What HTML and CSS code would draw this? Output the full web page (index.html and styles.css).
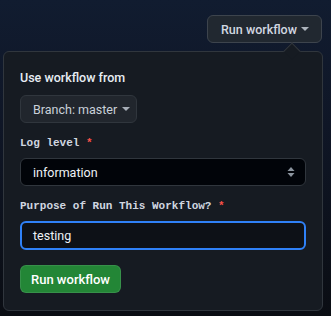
FILE: index.html
```html
<!DOCTYPE html>
<html lang="en">
  <head>
    <meta charset="UTF-8" />
    <meta name="viewport" content="width=device-width,initial-scale=1.0" />
    <title>Run workflow</title>
    <link rel="stylesheet" href="styles.css">
  </head>
  <body>
    <header class="top">
      <button class="top-btn">Run workflow <span class="caret"></span></button>
    </header>
    <div class="popover">
      <div class="label">Use workflow from</div>
      <button class="branch-btn">Branch: master <span class="caret"></span></button>

      <div class="mono-label">Log level <span class="req">*</span></div>
      <div class="select">
        <span>information</span>
        <svg class="updown" width="8" height="12" viewBox="0 0 8 12">
          <path d="M4 1 L7.5 5 H0.5 Z" fill="#8b949e" />
          <path d="M4 11 L7.5 7 H0.5 Z" fill="#8b949e" />
        </svg>
      </div>

      <div class="mono-label">Purpose of Run This Workflow? <span class="req">*</span></div>
      <div class="input">testing</div>

      <button class="run-btn">Run workflow</button>
    </div>
  </body>
</html>
```

FILE: styles.css
```css
* {
  padding: 0;
  margin: 0;
  box-sizing: border-box;
  font-family: Roboto, 'Liberation Sans', sans-serif;
  white-space: nowrap;
}
body {
  width: 331px;
  height: 316px;
  overflow: hidden;
  background: linear-gradient(180deg, #111c30 0%, #0f1626 40%, #0a0d13 100%);
}
button {
  cursor: pointer;
}
.top {
  display: flex;
  justify-content: flex-end;
  padding: 15px 9px 0 0;
}
.top-btn {
  height: 28px;
  width: 115px;
  display: flex;
  align-items: center;
  justify-content: space-between;
  padding: 0 12px 0 13px;
  background: #212830;
  border: 1px solid #3d444d;
  border-radius: 6px;
  color: #d1d7e0;
  font-size: 12.5px;
  font-weight: 500;
}
.caret {
  width: 0;
  height: 0;
  border-left: 4px solid transparent;
  border-right: 4px solid transparent;
  border-top: 4px solid currentColor;
  opacity: 0.8;
}
.popover {
  position: relative;
  margin: 8px 0 0 3px;
  width: 320px;
  background: #161b22;
  border: 1px solid #30363d;
  border-radius: 6px;
  padding: 16px 16px 17px;
  display: flex;
  flex-direction: column;
  align-items: flex-start;
}
.popover::before {
  content: '';
  position: absolute;
  top: -7px;
  right: 24px;
  width: 11px;
  height: 11px;
  background: #161b22;
  border-left: 1px solid #30363d;
  border-top: 1px solid #30363d;
  transform: rotate(45deg);
}
.label {
  font-size: 12.5px;
  font-weight: 500;
  line-height: 20px;
  color: #e6edf3;
}
.branch-btn {
  margin-top: 7px;
  height: 28px;
  width: 117px;
  display: flex;
  align-items: center;
  gap: 5px;
  padding: 0 12px;
  background: #21262d;
  border: 1px solid #30363d;
  border-radius: 6px;
  color: #c9d1d9;
  font-size: 12.5px;
}
.mono-label {
  margin-top: 10px;
  font-family: 'Liberation Mono', 'DejaVu Sans Mono', monospace;
  font-size: 11px;
  font-weight: 700;
  line-height: 20px;
  color: #d1d7e0;
}
.req {
  font-family: inherit;
  color: #f85149;
}
.select {
  margin-top: 5px;
  width: 100%;
  height: 28px;
  display: flex;
  align-items: center;
  justify-content: space-between;
  padding: 0 10px 0 12px;
  background: #010409;
  border: 1px solid #30363d;
  border-radius: 6px;
  color: #eef2f6;
  font-size: 12.5px;
}
.input {
  margin-top: 5px;
  width: 100%;
  height: 29px;
  display: flex;
  align-items: center;
  padding: 0 11px;
  background: #0d1117;
  border: 2px solid #2f81f7;
  border-radius: 6px;
  color: #eef2f6;
  font-size: 12.5px;
}
.run-btn {
  margin-top: 15px;
  height: 28px;
  width: 101px;
  background: #238636;
  border: 1px solid rgba(240, 246, 252, 0.1);
  border-radius: 6px;
  color: #ffffff;
  font-size: 13px;
  font-weight: 500;
}
```
